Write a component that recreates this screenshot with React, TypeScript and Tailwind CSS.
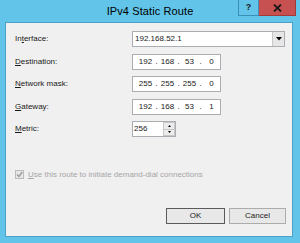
import React from "react";

function IpBox({ parts }: { parts: string[] }) {
  return (
    <div className="w-[89px] h-[16px] bg-white border border-[#abadb3] flex items-center pl-[3px] overflow-hidden">
      {parts.map((p, i) => (
        <React.Fragment key={i}>
          <span className="w-[19px] shrink-0 text-center">{p}</span>
          {i < 3 && <span className="w-[3px] shrink-0 text-center">.</span>}
        </React.Fragment>
      ))}
    </div>
  );
}

function Label({ pre, u, post }: { pre?: string; u: string; post: string }) {
  return (
    <div className="w-[117px] shrink-0">
      {pre}
      <span className="underline underline-offset-[1px]">{u}</span>
      {post}
    </div>
  );
}

export default function App() {
  return (
    <div
      className="w-[300px] h-[243px] bg-[#62c4e9] flex flex-col text-[8px] text-[#1a1a1a] leading-none"
      style={{ fontFamily: '"Liberation Sans", Arial, sans-serif' }}
    >
      {/* Title bar */}
      <div className="h-[22px] flex items-start shrink-0">
        <div className="w-[62px] shrink-0" />
        <div className="flex-1 text-center text-[11px] pt-[6px] text-black tracking-[0.1px]">
          IPv4 Static Route
        </div>
        <div className="flex pr-[4px]">
          <div className="w-[21px] h-[16px] border border-[#3c8db8] border-t-0 bg-[#62c4e9] flex items-center justify-center text-[9px] font-bold">
            ?
          </div>
          <div className="w-[37px] h-[16px] border border-[#a33a3a] border-t-0 border-l-0 bg-[#c75050] flex items-center justify-center">
            <svg width="9" height="8" viewBox="0 0 9 8">
              <path d="M1 0.5 L8 7.5 M8 0.5 L1 7.5" stroke="#1a1a1a" strokeWidth="1.8" />
            </svg>
          </div>
        </div>
      </div>

      {/* Content */}
      <div className="flex-1 ml-[5px] mr-[7px] mb-[6px] bg-[#f0f0f0] border border-[#4aa3c6] flex flex-col pl-[9px] pr-[6px]">
        {/* Interface */}
        <div className="flex items-center h-[16px] mt-[8px]">
          <Label pre="In" u="t" post="erface:" />
          <div className="w-[153px] h-[16px] bg-white border border-[#abadb3] flex items-center pl-[2px]">
            <span className="flex-1">192.168.52.1</span>
            <div className="w-[12px] h-[14px] bg-[#e6e6e6] border-l border-[#c8c8c8] flex items-center justify-center">
              <svg width="6" height="4" viewBox="0 0 6 4">
                <path d="M0 0 H6 L3 3.5 Z" fill="#000" />
              </svg>
            </div>
          </div>
        </div>

        {/* Destination */}
        <div className="flex items-center h-[16px] mt-[7px]">
          <Label u="D" post="estination:" />
          <IpBox parts={["192", "168", "53", "0"]} />
        </div>

        {/* Network mask */}
        <div className="flex items-center h-[16px] mt-[6px]">
          <Label u="N" post="etwork mask:" />
          <IpBox parts={["255", "255", "255", "0"]} />
        </div>

        {/* Gateway */}
        <div className="flex items-center h-[16px] mt-[7px]">
          <Label u="G" post="ateway:" />
          <IpBox parts={["192", "168", "53", "1"]} />
        </div>

        {/* Metric */}
        <div className="flex items-center h-[16px] mt-[6px]">
          <Label u="M" post="etric:" />
          <div className="w-[44px] h-[16px] bg-white border border-[#abadb3] flex items-center">
            <span className="flex-1 pl-[1px]">256</span>
            <div className="w-[12px] h-[14px] flex flex-col">
              <div className="flex-1 bg-[#ececec] border border-[#c8c8c8] flex items-center justify-center">
                <svg width="3" height="2" viewBox="0 0 3 2">
                  <path d="M0 2 H3 L1.5 0 Z" fill="#000" />
                </svg>
              </div>
              <div className="flex-1 bg-[#ececec] border border-t-0 border-[#c8c8c8] flex items-center justify-center">
                <svg width="3" height="2" viewBox="0 0 3 2">
                  <path d="M0 0 H3 L1.5 2 Z" fill="#000" />
                </svg>
              </div>
            </div>
          </div>
        </div>

        {/* Checkbox */}
        <div className="flex items-center mt-[33px] text-[#a6a6a6]">
          <div className="w-[9px] h-[9px] border border-[#bcbcbc] bg-[#e6e6e6] flex items-center justify-center mr-[4px]">
            <svg width="7" height="7" viewBox="0 0 7 7">
              <path d="M1 3.5 L3 5.5 L6.2 1" stroke="#9a9a9a" strokeWidth="1.3" fill="none" />
            </svg>
          </div>
          <span>
            <span className="underline underline-offset-[1px]">U</span>se this route to initiate demand-dial connections
          </span>
        </div>

        {/* Buttons */}
        <div className="flex-1" />
        <div className="flex justify-end gap-[4px] mb-[12px]">
          <div className="w-[59px] h-[16px] border border-[#5a5a5a] bg-[#e8e8e8] flex items-center justify-center">
            OK
          </div>
          <div className="w-[57px] h-[16px] border border-[#acacac] bg-[#e8e8e8] flex items-center justify-center">
            Cancel
          </div>
        </div>
      </div>
    </div>
  );
}
